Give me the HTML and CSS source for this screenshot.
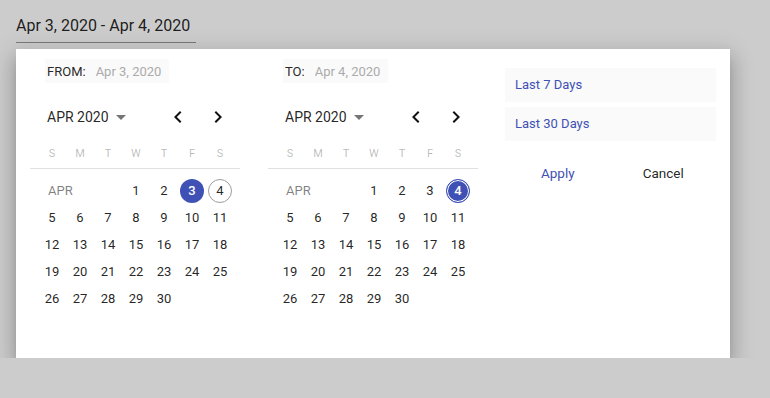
FILE: index.html
```html
<!DOCTYPE html>
<html lang="en">
<head>
  <meta charset="UTF-8" />
  <meta name="viewport" content="width=device-width, initial-scale=1.0" />
  <title>Date Range Picker</title>
  <link rel="stylesheet" href="styles.css">
</head>
<body>
  <div class="date-field">Apr 3, 2020 - Apr 4, 2020</div>

  <div class="picker">
    <!-- from calendar -->
    <div class="calendar">
      <label class="range-input">
        <span class="range-label">FROM:</span>
        <input class="range-value" value="Apr 3, 2020" readonly>
      </label>
      <div class="cal-header">
        <span class="period">APR 2020</span>
        <span class="caret"></span>
        <button class="nav-btn"><svg viewBox="0 0 24 24"><path d="M15.41 7.41L14 6l-6 6 6 6 1.41-1.41L10.83 12z"/></svg></button>
        <button class="nav-btn"><svg viewBox="0 0 24 24"><path d="M10 6L8.59 7.41 13.17 12l-4.58 4.59L10 18l6-6z"/></svg></button>
      </div>
      <div class="weekdays">
        <div class="week-row"><span>S</span><span>M</span><span>T</span><span>W</span><span>T</span><span>F</span><span>S</span></div>
      </div>
      <div class="days">
        <span class="month-label">APR</span>
        <span class="day">1</span><span class="day">2</span><span class="day selected">3</span><span class="day outlined">4</span>
        <span class="day">5</span><span class="day">6</span><span class="day">7</span><span class="day">8</span><span class="day">9</span><span class="day">10</span><span class="day">11</span>
        <span class="day">12</span><span class="day">13</span><span class="day">14</span><span class="day">15</span><span class="day">16</span><span class="day">17</span><span class="day">18</span>
        <span class="day">19</span><span class="day">20</span><span class="day">21</span><span class="day">22</span><span class="day">23</span><span class="day">24</span><span class="day">25</span>
        <span class="day">26</span><span class="day">27</span><span class="day">28</span><span class="day">29</span><span class="day">30</span>
      </div>
    </div>

    <!-- to calendar -->
    <div class="calendar">
      <label class="range-input">
        <span class="range-label">TO:</span>
        <input class="range-value" value="Apr 4, 2020" readonly>
      </label>
      <div class="cal-header">
        <span class="period">APR 2020</span>
        <span class="caret"></span>
        <button class="nav-btn"><svg viewBox="0 0 24 24"><path d="M15.41 7.41L14 6l-6 6 6 6 1.41-1.41L10.83 12z"/></svg></button>
        <button class="nav-btn"><svg viewBox="0 0 24 24"><path d="M10 6L8.59 7.41 13.17 12l-4.58 4.59L10 18l6-6z"/></svg></button>
      </div>
      <div class="weekdays">
        <div class="week-row"><span>S</span><span>M</span><span>T</span><span>W</span><span>T</span><span>F</span><span>S</span></div>
      </div>
      <div class="days">
        <span class="month-label">APR</span>
        <span class="day">1</span><span class="day">2</span><span class="day">3</span><span class="day selected ringed">4</span>
        <span class="day">5</span><span class="day">6</span><span class="day">7</span><span class="day">8</span><span class="day">9</span><span class="day">10</span><span class="day">11</span>
        <span class="day">12</span><span class="day">13</span><span class="day">14</span><span class="day">15</span><span class="day">16</span><span class="day">17</span><span class="day">18</span>
        <span class="day">19</span><span class="day">20</span><span class="day">21</span><span class="day">22</span><span class="day">23</span><span class="day">24</span><span class="day">25</span>
        <span class="day">26</span><span class="day">27</span><span class="day">28</span><span class="day">29</span><span class="day">30</span>
      </div>
    </div>

    <!-- presets and actions -->
    <div class="side">
      <div class="preset">Last 7 Days</div>
      <div class="preset">Last 30 Days</div>
      <div class="actions">
        <button class="action apply">Apply</button>
        <button class="action">Cancel</button>
      </div>
    </div>
  </div>
</body>
</html>
```

FILE: styles.css
```css
body {
  margin: 0;
  font-family: Roboto, "Liberation Sans", Arial, sans-serif;
  background: #cccccc;
  color: rgba(0, 0, 0, 0.87);
}
.date-field {
  width: 180px;
  margin-left: 16px;
  padding: 16px 0 6px;
  font-size: 16px;
  line-height: 20px;
  border-bottom: 1px solid #7a7a7a;
}
.picker {
  display: flex;
  align-items: flex-start;
  width: 714px;
  height: 309px;
  box-sizing: border-box;
  margin: 6px 0 0 16px;
  padding: 10px 14px 0;
  background: #fff;
  box-shadow: 0 7px 8px -4px rgba(0, 0, 0, 0.2), 0 12px 17px 2px rgba(0, 0, 0, 0.14), 0 5px 22px 4px rgba(0, 0, 0, 0.12);
}
.calendar {
  width: 210px;
  margin-right: 28px;
}
.range-input {
  display: inline-flex;
  align-items: center;
  height: 24px;
  margin-left: 15px;
  padding: 0 3px 0 2px;
  background: #fafafa;
  font-size: 13px;
}
.range-value {
  width: 70px;
  margin-left: 10px;
  padding: 0;
  border: none;
  background: transparent;
  font-family: inherit;
  font-size: 13px;
  color: #ababab;
  outline: none;
}
.cal-header {
  display: flex;
  align-items: center;
  height: 40px;
  margin-top: 14px;
}
.period {
  margin-left: 17px;
  font-size: 14px;
}
.caret {
  margin: 1px 0 0 7px;
  border-left: 5px solid transparent;
  border-right: 5px solid transparent;
  border-top: 5px solid #757575;
}
.nav-btn {
  width: 40px;
  height: 40px;
  padding: 0;
  border: none;
  background: none;
  display: flex;
  align-items: center;
  justify-content: center;
}
.nav-btn:first-of-type {
  margin-left: auto;
}
.nav-btn:last-of-type {
  margin-right: 2px;
}
.nav-btn svg {
  width: 24px;
  height: 24px;
  fill: #111;
}
.weekdays {
  border-bottom: 1px solid #e0e0e0;
}
.week-row {
  display: grid;
  grid-template-columns: repeat(7, 28px);
  height: 29px;
  padding-top: 2px;
  margin-left: 8px;
  align-items: center;
  text-align: center;
  font-size: 11px;
  color: rgba(0, 0, 0, 0.28);
}
.days {
  display: grid;
  grid-template-columns: repeat(7, 28px);
  grid-auto-rows: 27px;
  margin-left: 8px;
  padding-top: 8px;
  align-items: center;
  justify-items: center;
  font-size: 13px;
}
.month-label {
  grid-column: span 3;
  justify-self: start;
  padding-left: 10px;
  color: rgba(0, 0, 0, 0.5);
}
.day {
  width: 24px;
  height: 24px;
  box-sizing: border-box;
  border-radius: 50%;
  display: flex;
  align-items: center;
  justify-content: center;
}
.outlined {
  border: 1px solid #9e9e9e;
}
.selected {
  background: #3f51b5;
  color: #fff;
  font-weight: 500;
}
.ringed {
  border: 1px solid #3f51b5;
  box-shadow: inset 0 0 0 1px #fff;
}
.side {
  width: 211px;
  margin: 9px 0 0 -1px;
}
.preset {
  height: 34px;
  line-height: 34px;
  padding-left: 10px;
  margin-bottom: 5px;
  background: #fafafa;
  font-size: 13px;
  color: #3f51b5;
}
.actions {
  display: flex;
  margin-top: 14px;
}
.action {
  flex: 1;
  height: 36px;
  border: none;
  background: none;
  font-family: inherit;
  font-size: 13.5px;
  color: rgba(0, 0, 0, 0.87);
}
.action.apply {
  color: #3f51b5;
}
```
